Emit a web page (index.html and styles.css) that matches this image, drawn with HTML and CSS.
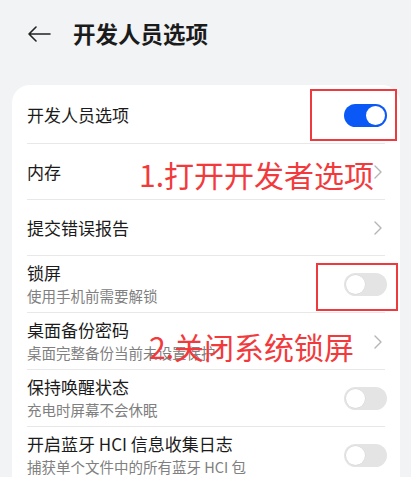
FILE: index.html
```html
<!DOCTYPE html>
<html lang="zh-CN">
<head>
<meta charset="utf-8">
<title>开发人员选项</title>
<link rel="stylesheet" href="styles.css">
</head>
<body>
<div class="page">
  <header class="header">
    <svg class="back" width="24" height="16" viewBox="0 0 24 16"><path d="M23 8H2M9 1L2 8l7 7" fill="none" stroke="#222" stroke-width="1.6" stroke-linecap="round" stroke-linejoin="round"/></svg>
    <h1 class="title">开发人员选项</h1>
  </header>
  <div class="card">
    <div class="row row-first">
      <div class="texts"><div class="main">开发人员选项</div></div>
      <span class="toggle on"><span class="knob"></span></span>
    </div>
    <div class="row">
      <div class="texts"><div class="main">内存</div></div>
      <span class="chev"><svg width="8" height="14" viewBox="0 0 8 14"><path d="M1 1l6 6-6 6" fill="none" stroke="#b5b5b5" stroke-width="1.4" stroke-linecap="round" stroke-linejoin="round"/></svg></span>
    </div>
    <div class="row">
      <div class="texts"><div class="main">提交错误报告</div></div>
      <span class="chev"><svg width="8" height="14" viewBox="0 0 8 14"><path d="M1 1l6 6-6 6" fill="none" stroke="#b5b5b5" stroke-width="1.4" stroke-linecap="round" stroke-linejoin="round"/></svg></span>
    </div>
    <div class="row row-double">
      <div class="texts"><div class="main">锁屏</div><div class="sub">使用手机前需要解锁</div></div>
      <span class="toggle"><span class="knob"></span></span>
    </div>
    <div class="row row-double">
      <div class="texts"><div class="main">桌面备份密码</div><div class="sub">桌面完整备份当前未设置保护</div></div>
      <span class="chev"><svg width="8" height="14" viewBox="0 0 8 14"><path d="M1 1l6 6-6 6" fill="none" stroke="#b5b5b5" stroke-width="1.4" stroke-linecap="round" stroke-linejoin="round"/></svg></span>
    </div>
    <div class="row row-double">
      <div class="texts"><div class="main">保持唤醒状态</div><div class="sub">充电时屏幕不会休眠</div></div>
      <span class="toggle"><span class="knob"></span></span>
    </div>
    <div class="row row-double row-last">
      <div class="texts"><div class="main">开启蓝牙 HCI 信息收集日志</div><div class="sub">捕获单个文件中的所有蓝牙 HCI 包</div></div>
      <span class="toggle"><span class="knob"></span></span>
    </div>
  </div>
  <div class="mark box1"></div>
  <div class="mark box2"></div>
  <div class="note note1">1.打开开发者选项</div>
  <div class="note note2">2.关闭系统锁屏</div>
</div>
</body>
</html>
```
FILE: styles.css
```css
* { box-sizing: border-box; }
html, body { margin: 0; padding: 0; }
body {
  background: #f1f3f5;
  font-family: "Noto Sans CJK SC", "Noto Sans", sans-serif;
  color: #1b1b1b;
  overflow: hidden;
  height: 477px;
}
.page {
  position: relative;
  width: 411px;
  height: 477px;
  display: flex;
  flex-direction: column;
  overflow: hidden;
}
.header {
  display: flex;
  align-items: center;
  height: 66px;
  padding-left: 27px;
  flex: none;
}
.back { display: block; margin-right: 22px; margin-top: 1px; }
.title {
  margin: 0;
  font-size: 22.5px;
  font-weight: 700;
  line-height: 30px;
  color: #1b1b1b;
}
.card {
  margin: 19px 11px 0 12px;
  background: #fff;
  border-radius: 18px 18px 0 0;
  padding: 0 13px 0 15px;
  flex: 1;
  min-height: 0;
  overflow: hidden;
}
.row {
  display: flex;
  align-items: center;
  justify-content: space-between;
  min-height: 56px;
  border-bottom: 1px solid #e8e8e8;
  margin-right: 2px;
}
.row-first { min-height: 59px; padding-top: 2px; }
.row-double { min-height: 55px; padding: 6px 0 5px; }
.row-last { border-bottom: none; }
.texts { display: flex; flex-direction: column; }
.main { font-size: 17px; line-height: 22px; }
.sub { font-size: 14.5px; line-height: 23px; color: #808080; }
.chev { display: flex; margin-right: 3px; }
.toggle {
  position: relative;
  width: 43px;
  height: 23px;
  border-radius: 12px;
  background: #e4e4e4;
  flex: none;
  margin-right: -2px;
}
.toggle .knob {
  position: absolute;
  left: 2px;
  top: 2px;
  width: 19px;
  height: 19px;
  border-radius: 50%;
  background: #fff;
  box-shadow: 0 0 0 0.5px #d6d6d6;
}
.toggle.on { background: #0a59f7; }
.toggle.on .knob { left: 22px; box-shadow: none; }
.mark {
  position: absolute;
  border: 2px solid #ee3a3f;
}
.box1 { left: 310px; top: 89px; width: 87px; height: 52px; }
.box2 { left: 316px; top: 263px; width: 82px; height: 48px; }
.note {
  position: absolute;
  font-size: 30px;
  line-height: 30px;
  color: #f23a3d;
  white-space: nowrap;
}
.note1 { left: 139px; top: 159px; }
.note2 { left: 149px; top: 331px; }
```
